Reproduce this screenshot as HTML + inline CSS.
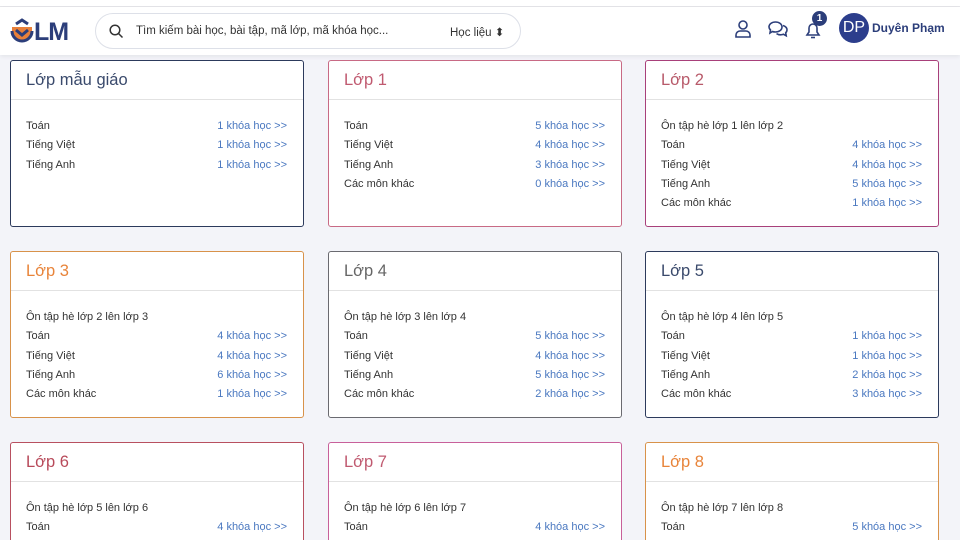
<!DOCTYPE html>
<html><head><meta charset="utf-8"><style>
*{box-sizing:border-box;margin:0;padding:0}
html,body{width:960px;height:540px;overflow:hidden}
body{background:#f3f4f9;font-family:"Liberation Sans",sans-serif;position:relative}
.top{position:absolute;left:0;top:0;width:960px;height:7px;background:#fff;border-bottom:1px solid #e4e4e8}
.hdr{position:absolute;left:0;top:7px;width:960px;height:48px;background:#fff;box-shadow:0 2px 4px rgba(0,0,0,.06)}
.logo{position:absolute;left:34px;top:11px;font-weight:bold;font-size:25px;color:#2c3e7a;letter-spacing:-1px}
.search{position:absolute;left:95px;top:6px;width:426px;height:36px;border:1px solid #dde0e8;border-radius:18px;font-size:11.5px;color:#333}
.card{position:absolute;width:294px;height:167px;background:#fff;border:1px solid;border-radius:3px}
.card.s{height:98px;border-bottom:none;border-radius:3px 3px 0 0}
.card h3{font-weight:normal;font-size:16.5px;height:39px;line-height:39px;padding-left:15px;border-bottom:1px solid #e2e2e2}
.card ul{list-style:none;padding:20px 16px 0 15px;font-size:11px;color:#333}
.card li{height:19.3px;display:flex;justify-content:space-between}
.card li span{color:#4a78c0}
</style></head><body>
<div class="top"></div>
<div class="hdr">
<svg style="position:absolute;left:10px;top:11px" width="24" height="25" viewBox="0 0 24 25"><path d="M6 6L12 2L18 6" fill="none" stroke="#2c3e7a" stroke-width="3"/><path d="M2 9h20v4a10 10 0 0 1-20 0z" fill="#e8803a"/><path d="M6 12l6 5 6-5" fill="none" stroke="#2c3e7a" stroke-width="3"/><path d="M2 13a10 10 0 0 0 20 0" fill="none" stroke="#2c3e7a" stroke-width="3"/></svg>
<div class="logo">LM</div>
<div class="search">
<svg style="position:absolute;left:13px;top:10px" width="15" height="15" viewBox="0 0 15 15"><circle cx="6" cy="6" r="4.8" fill="none" stroke="#333" stroke-width="1.5"/><path d="M9.5 9.5L13.5 13.5" stroke="#333" stroke-width="1.5"/></svg>
<span style="position:absolute;left:40px;top:11px">Tìm kiếm bài học, bài tập, mã lớp, mã khóa học...</span>
<span style="position:absolute;left:354px;top:11px">Học liệu ⬍</span>
</div>
<svg style="position:absolute;left:734px;top:12px" width="18" height="20" viewBox="0 0 18 20" fill="none" stroke="#2c3e7a" stroke-width="1.6"><circle cx="9" cy="6" r="4"/><path d="M2 18v-2a4 4 0 0 1 4-4h6a4 4 0 0 1 4 4v2z"/></svg>
<svg style="position:absolute;left:767px;top:13px" width="22" height="18" viewBox="0 0 22 18" fill="none" stroke="#2c3e7a" stroke-width="1.6"><path d="M2 7c0-3 3-5 6.5-5S15 4 15 7s-3 5-6.5 5c-1 0-2 0-3-.5L3 13l.5-3C2.5 9 2 8 2 7z"/><path d="M16 5.5c2.5.8 4 2.5 4 4.5 0 1-.5 2-1.3 2.8l.5 3-2.7-1.5c-1 .4-2 .5-3 .5-1.5 0-3-.5-4-1.2"/></svg>
<svg style="position:absolute;left:804px;top:13px" width="18" height="20" viewBox="0 0 18 20" fill="none" stroke="#2c3e7a" stroke-width="1.6"><path d="M3 15h12l-2-3V8a4 4 0 0 0-8 0v4z"/><path d="M7 17.5h4"/></svg>
<div style="position:absolute;left:812px;top:4px;width:15px;height:15px;border-radius:50%;background:#2c3e7a;color:#fff;font-size:10px;text-align:center;line-height:15px;font-weight:bold">1</div>
<div style="position:absolute;left:839px;top:6px;width:30px;height:30px;border-radius:50%;background:#2c3e8c;color:#fff;font-size:16px;text-align:center;line-height:30px">DP</div>
<div style="position:absolute;left:872px;top:14px;font-size:12px;color:#2c3e7a;font-weight:bold">Duyên Phạm</div>
</div>

<div class="card" style="left:10px;top:60px;border-color:#2c3a5c"><h3 style="color:#3a4a6c">Lớp mẫu giáo</h3><ul><li>Toán<span>1 khóa học &gt;&gt;</span></li><li>Tiếng Việt<span>1 khóa học &gt;&gt;</span></li><li>Tiếng Anh<span>1 khóa học &gt;&gt;</span></li></ul></div>
<div class="card" style="left:328px;top:60px;border-color:#c86a85"><h3 style="color:#c05a70">Lớp 1</h3><ul><li>Toán<span>5 khóa học &gt;&gt;</span></li><li>Tiếng Việt<span>4 khóa học &gt;&gt;</span></li><li>Tiếng Anh<span>3 khóa học &gt;&gt;</span></li><li>Các môn khác<span>0 khóa học &gt;&gt;</span></li></ul></div>
<div class="card" style="left:645px;top:60px;border-color:#a8407a"><h3 style="color:#b85a6a">Lớp 2</h3><ul><li>Ôn tập hè lớp 1 lên lớp 2</li><li>Toán<span>4 khóa học &gt;&gt;</span></li><li>Tiếng Việt<span>4 khóa học &gt;&gt;</span></li><li>Tiếng Anh<span>5 khóa học &gt;&gt;</span></li><li>Các môn khác<span>1 khóa học &gt;&gt;</span></li></ul></div>

<div class="card" style="left:10px;top:251px;border-color:#d8924a"><h3 style="color:#e8843a">Lớp 3</h3><ul><li>Ôn tập hè lớp 2 lên lớp 3</li><li>Toán<span>4 khóa học &gt;&gt;</span></li><li>Tiếng Việt<span>4 khóa học &gt;&gt;</span></li><li>Tiếng Anh<span>6 khóa học &gt;&gt;</span></li><li>Các môn khác<span>1 khóa học &gt;&gt;</span></li></ul></div>
<div class="card" style="left:328px;top:251px;border-color:#6a6a70"><h3 style="color:#666">Lớp 4</h3><ul><li>Ôn tập hè lớp 3 lên lớp 4</li><li>Toán<span>5 khóa học &gt;&gt;</span></li><li>Tiếng Việt<span>4 khóa học &gt;&gt;</span></li><li>Tiếng Anh<span>5 khóa học &gt;&gt;</span></li><li>Các môn khác<span>2 khóa học &gt;&gt;</span></li></ul></div>
<div class="card" style="left:645px;top:251px;border-color:#2c3a5c"><h3 style="color:#3a4a6c">Lớp 5</h3><ul><li>Ôn tập hè lớp 4 lên lớp 5</li><li>Toán<span>1 khóa học &gt;&gt;</span></li><li>Tiếng Việt<span>1 khóa học &gt;&gt;</span></li><li>Tiếng Anh<span>2 khóa học &gt;&gt;</span></li><li>Các môn khác<span>3 khóa học &gt;&gt;</span></li></ul></div>

<div class="card s" style="left:10px;top:442px;border-color:#b85060"><h3 style="color:#b84a5a">Lớp 6</h3><ul><li>Ôn tập hè lớp 5 lên lớp 6</li><li>Toán<span>4 khóa học &gt;&gt;</span></li></ul></div>
<div class="card s" style="left:328px;top:442px;border-color:#c8609a"><h3 style="color:#c05a70">Lớp 7</h3><ul><li>Ôn tập hè lớp 6 lên lớp 7</li><li>Toán<span>4 khóa học &gt;&gt;</span></li></ul></div>
<div class="card s" style="left:645px;top:442px;border-color:#d8924a"><h3 style="color:#e8843a">Lớp 8</h3><ul><li>Ôn tập hè lớp 7 lên lớp 8</li><li>Toán<span>5 khóa học &gt;&gt;</span></li></ul></div>
</body></html>
